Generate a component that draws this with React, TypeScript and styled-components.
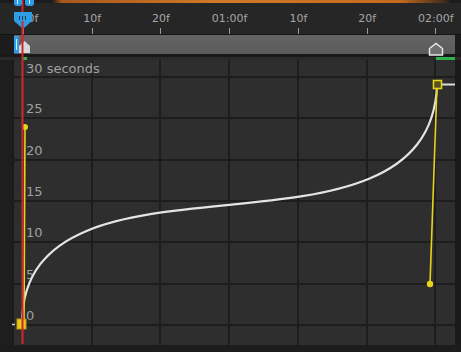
import * as React from 'react';
import styled, { createGlobalStyle } from 'styled-components';

const GlobalStyle = createGlobalStyle`
    html, body {
        margin: 0;
        padding: 0;
        background: #1c1c1c;
    }
    body {
        font-family: "DejaVu Sans", Verdana, sans-serif;
    }
`;

const Panel = styled.div`
    position: relative;
    width: 461px;
    height: 352px;
    overflow: hidden;
    display: flex;
    flex-direction: column;
    background: #1c1c1c;
`;

const TopStrip = styled.div`
    flex: none;
    height: 3px;
    background: linear-gradient(
        to right,
        #1c1c1c 0,
        #1c1c1c 52px,
        #a8581c 62px,
        #cf7a26 220px,
        #c46a1e 400px,
        #3a2a1c 446px,
        #1c1c1c 452px
    );
`;

const Ruler = styled.div`
    flex: none;
    height: 31px;
    display: flex;
    background: #262626;
    border-bottom: 1px solid #141414;
`;

const Tick = styled.div`
    flex: none;
    width: 68.75px;
    display: flex;
    flex-direction: column;
    align-items: center;
    padding-top: 9px;
    &:first-child {
        margin-left: -11px;
    }
`;

const TickLabel = styled.span<{ $shift?: number }>`
    font-size: 11px;
    line-height: 13px;
    color: #a6a6a6;
    white-space: nowrap;
    margin-left: ${(p) => p.$shift || 0}px;
`;

const TickMark = styled.div`
    width: 1px;
    height: 6px;
    margin-top: 3px;
    background: #9a9a9a;
`;

const WorkRow = styled.div`
    position: relative;
    flex: none;
    height: 19px;
    display: flex;
    padding: 0 6px 0 14px;
`;

const WorkBar = styled.div`
    flex: 1;
    background: linear-gradient(to bottom, #636363, #5b5b5b);
`;

const OutMarker = styled.svg`
    position: absolute;
    left: 428px;
    top: 7px;
`;

const Separator = styled.div`
    flex: none;
    height: 6px;
    display: flex;
    align-items: flex-end;
    justify-content: space-between;
    padding: 0 6px 0 23px;
    background: linear-gradient(to bottom, #181818 0, #181818 3px, #2a2a2a 3px);
`;

const GreenMark = styled.div<{ $w: number }>`
    width: ${(p) => p.$w}px;
    height: 3px;
    background: #2fb24c;
`;

const GraphRow = styled.div`
    flex: none;
    height: 285px;
    display: flex;
`;

const Gutter = styled.div<{ $w: number; $bg: string }>`
    flex: none;
    width: ${(p) => p.$w}px;
    background: ${(p) => p.$bg};
`;

const Chart = styled.svg`
    flex: none;
    display: block;
    background: #2e2e2e;
`;

const AxisText = styled.text`
    font-family: "DejaVu Sans", Verdana, sans-serif;
    font-size: 13px;
    fill: #a0a0a0;
`;

const BottomStrip = styled.div`
    flex: 1;
    background: #1c1c1c;
`;

const Playhead = styled.svg`
    position: absolute;
    left: 11px;
    top: 0;
    pointer-events: none;
`;

const ticks = ['00f', '10f', '20f', '01:00f', '10f', '20f', '02:00f'];
const vLines = [80, 148, 217, 286, 355, 423];
const hLines = [17, 58, 100, 141, 182, 224, 265];
const values = ['25', '20', '15', '10', '5', '0'];

const YELLOW = '#e6d31a';
const BLUE = '#2f9de6';

export default function App() {
    return (
        <Panel>
            <GlobalStyle />
            <TopStrip />
            <Ruler>
                {ticks.map((t, i) => (
                    <Tick key={i}>
                        <TickLabel $shift={i === 0 ? 12 : 0}>{t}</TickLabel>
                        <TickMark />
                    </Tick>
                ))}
            </Ruler>
            <WorkRow>
                <WorkBar />
                <OutMarker width="16" height="14" viewBox="0 0 16 14">
                    <path
                        d="M1.5 13 V6.5 L8 1.5 L14.5 6.5 V13 Z"
                        fill="#707070"
                        stroke="#e6e6e6"
                        strokeWidth="1.5"
                    />
                </OutMarker>
            </WorkRow>
            <Separator>
                <GreenMark $w={4} />
                <GreenMark $w={19} />
            </Separator>
            <GraphRow>
                <Gutter $w={12} $bg="#1e1e1e" />
                <Chart width="443" height="285" viewBox="0 0 443 285">
                    <rect x="0" y="0" width="2" height="285" fill="#1a1a1a" />
                    {vLines.map((x) => (
                        <line
                            key={x}
                            x1={x}
                            y1="0"
                            x2={x}
                            y2="285"
                            stroke="#1d1d1d"
                            strokeWidth="2"
                        />
                    ))}
                    {hLines.map((y) => (
                        <line
                            key={y}
                            x1="0"
                            y1={y}
                            x2="443"
                            y2={y}
                            stroke="#1d1d1d"
                            strokeWidth="2"
                        />
                    ))}
                    <AxisText x="14" y="13">
                        30 seconds
                    </AxisText>
                    {values.map((v, i) => (
                        <AxisText key={v} x="14" y={hLines[i + 1] - 5}>
                            {v}
                        </AxisText>
                    ))}
                    <path
                        d="M10 262 C13 67 418 224 425 25"
                        fill="none"
                        stroke="#e4e4e4"
                        strokeWidth="2.2"
                    />
                    {/* bezier handles */}
                    <line x1="12" y1="262" x2="13" y2="67" stroke={YELLOW} strokeWidth="1.6" />
                    <circle cx="13" cy="67" r="3" fill={YELLOW} />
                    <line x1="425" y1="25" x2="418" y2="224" stroke={YELLOW} strokeWidth="1.6" />
                    <circle cx="418" cy="224" r="3.2" fill={YELLOW} />
                    {/* keyframes */}
                    <line x1="0" y1="264.5" x2="3" y2="264.5" stroke="#cfcfcf" strokeWidth="1.5" />
                    <rect x="5" y="259" width="9" height="10" fill="#e9c81c" stroke="#b89a12" strokeWidth="1" />
                    <line x1="430" y1="24.5" x2="443" y2="24.5" stroke="#dedede" strokeWidth="2" />
                    <rect
                        x="421.5"
                        y="20.5"
                        width="8"
                        height="8"
                        fill="#55501e"
                        stroke={YELLOW}
                        strokeWidth="1.6"
                    />
                </Chart>
                <Gutter $w={6} $bg="#1a1a1a" />
            </GraphRow>
            <BottomStrip />
            <Playhead width="24" height="344" viewBox="0 0 24 344">
                <rect x="10.5" y="0" width="2" height="344" fill="#d0282a" />
                {/* top grip */}
                <rect x="3" y="-4" width="8" height="10" rx="3" fill={BLUE} />
                <rect x="14" y="-4" width="9" height="10" rx="3" fill={BLUE} />
                <rect x="6" y="0" width="1" height="4" fill="#cfe8fa" />
                <rect x="18" y="0" width="1" height="4" fill="#cfe8fa" />
                {/* head */}
                <path d="M3 12 H21 V21 L13 28 H11 L3 21 Z" fill={BLUE} />
                <rect x="8" y="16" width="1" height="4" fill="#173a55" />
                <rect x="11" y="16" width="1" height="4" fill="#173a55" />
                <rect x="14" y="16" width="1" height="4" fill="#173a55" />
                <rect x="10.5" y="21" width="2" height="8" fill="#d0282a" />
                {/* work area start */}
                <rect x="3" y="36" width="5" height="17" fill={BLUE} />
                <rect x="5" y="39" width="1" height="11" fill="#d8eefc" />
                <path d="M8 53 V46 L13.5 41 L19 46 V53 Z" fill="#d8d8d8" />
                <rect x="10.5" y="36" width="2" height="18" fill="#d0282a" />
            </Playhead>
        </Panel>
    );
}
